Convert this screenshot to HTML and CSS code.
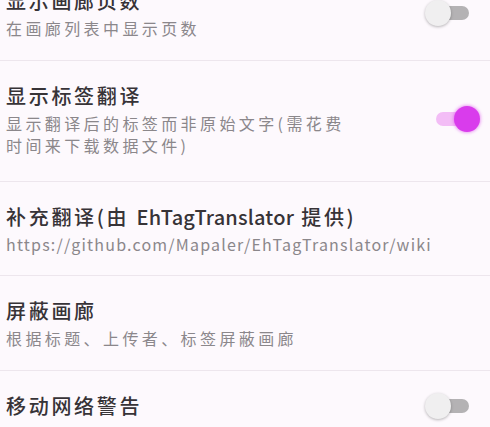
FILE: index.html
```html
<!DOCTYPE html>
<html lang="zh-CN">
<head>
<meta charset="utf-8">
<title>设置</title>
<link rel="stylesheet" href="styles.css">
</head>
<body>
<div class="list">
  <div class="row">
    <div class="text narrow">
      <div class="title">显示画廊页数</div>
      <div class="summary">在画廊列表中显示页数</div>
    </div>
    <div class="switch"><span class="track"></span><span class="thumb"></span></div>
  </div>
  <div class="row tall">
    <div class="text narrow">
      <div class="title">显示标签翻译</div>
      <div class="summary">显示翻译后的标签而非原始文字(需花费时间来下载数据文件)</div>
    </div>
    <div class="switch on"><span class="track"></span><span class="thumb"></span></div>
  </div>
  <div class="row">
    <div class="text">
      <div class="title">补充翻译(由 <span class="latin">EhTagTranslator</span> 提供)</div>
      <div class="summary url">https://github.com/Mapaler/EhTagTranslator/wiki</div>
    </div>
  </div>
  <div class="row">
    <div class="text">
      <div class="title">屏蔽画廊</div>
      <div class="summary">根据标题、上传者、标签屏蔽画廊</div>
    </div>
  </div>
  <div class="row">
    <div class="text narrow">
      <div class="title">移动网络警告</div>
    </div>
    <div class="switch"><span class="track"></span><span class="thumb"></span></div>
  </div>
</div>
</body>
</html>
```
FILE: styles.css
```css
html, body {
  margin: 0;
  padding: 0;
  background: #fdf9fd;
  overflow: hidden;
}
body {
  width: 490px;
  height: 427px;
  font-family: "Noto Sans CJK SC", "Noto Sans", sans-serif;
}
.list {
  margin-top: -34px;
}
.row {
  display: flex;
  align-items: center;
  padding: 21px 0 20px 6px;
  border-bottom: 1px solid #ede6ed;
}
.row.tall {
  padding-bottom: 24px;
}
.text {
  flex: 1;
  min-width: 0;
}
.text.narrow {
  flex: 0 0 356px;
}
.title {
  font-size: 20px;
  line-height: 28px;
  letter-spacing: 2.7px;
  color: #373337;
  font-weight: 500;
  white-space: nowrap;
}
.latin {
  letter-spacing: 0.2px;
}
.summary {
  margin-top: 2px;
  font-size: 16px;
  line-height: 22.5px;
  letter-spacing: 3.4px;
  color: #8b878b;
}
.summary.url {
  letter-spacing: 1.2px;
  white-space: nowrap;
}
.switch {
  position: relative;
  width: 57px;
  height: 28px;
  margin-left: auto;
  margin-right: 8px;
  flex: none;
}
.track {
  position: absolute;
  left: 11px;
  top: 7px;
  width: 33px;
  height: 14px;
  border-radius: 7px;
  background: #b4b2b4;
}
.thumb {
  position: absolute;
  left: 0;
  top: 1px;
  width: 26px;
  height: 26px;
  border-radius: 50%;
  background: #f0eff0;
  box-shadow: 0 1px 3px rgba(0, 0, 0, 0.28);
}
.switch.on .track {
  background: #f3bdf6;
}
.switch.on .thumb {
  left: 29px;
  background: #d93cec;
  box-shadow: 0 0 3px 1px rgba(217, 60, 236, 0.45);
}
```
